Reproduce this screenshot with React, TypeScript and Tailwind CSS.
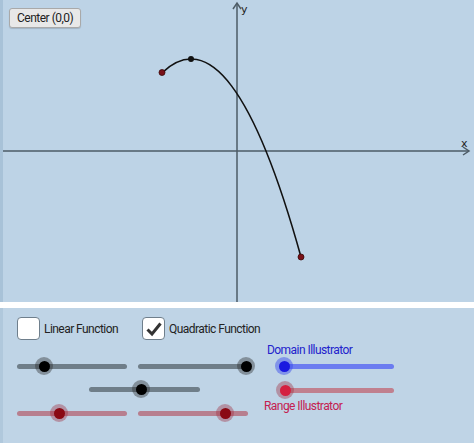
type SliderProps = {
  width: number;
  pos: number;
  track: string;
  thumb: string;
  halo: string;
};

function Slider({ width, pos, track, thumb, halo }: SliderProps) {
  return (
    <div className="relative h-[18px] shrink-0" style={{ width }}>
      <div className={`absolute left-0 right-0 top-[6.5px] h-[5px] rounded-full ${track}`} />
      <div
        className={`absolute top-0 h-[18px] w-[18px] -ml-[9px] rounded-full ${halo} flex items-center justify-center`}
        style={{ left: pos }}
      >
        <div className={`h-[11px] w-[11px] rounded-full ${thumb}`} />
      </div>
    </div>
  );
}

function Checkbox({ checked, label }: { checked: boolean; label: string }) {
  return (
    <div className="flex items-center gap-[4px]">
      <div className="h-[23px] w-[23px] rounded-[4px] border-[1.5px] border-[#6f7f8c] bg-white flex items-center justify-center">
        {checked && (
          <svg width="18" height="18" viewBox="0 0 18 18">
            <path d="M2.5 9.5 L7 14 L15.5 3.5" fill="none" stroke="#333" strokeWidth="3" strokeLinejoin="miter" />
          </svg>
        )}
      </div>
      <span className="text-[12px] tracking-[-0.55px] text-[#222]">{label}</span>
    </div>
  );
}

const gray = { track: "bg-[#6f7e89]", thumb: "bg-black", halo: "bg-[#2b2b2b]/40" };
const pink = { track: "bg-[#b77f8f]", thumb: "bg-[#8a0a14]", halo: "bg-[#a03040]/40" };

export default function App() {
  return (
    <div className="w-[474px] h-[448px] bg-white font-['Roboto',sans-serif] overflow-hidden">
      <div className="relative h-[302px] bg-[#bdd3e6] border-l-[3px] border-[#a8c2d8]">
        <svg className="absolute inset-0" width="471" height="302" viewBox="3 0 471 302">
          <line x1="3" y1="151" x2="468" y2="151" stroke="#4d5b66" strokeWidth="1.5" />
          <path d="M463 147 L469 151 L463 155" fill="none" stroke="#4d5b66" strokeWidth="1.5" />
          <line x1="237" y1="4" x2="237" y2="302" stroke="#4d5b66" strokeWidth="1.5" />
          <path d="M233 9 L237 3 L241 9" fill="none" stroke="#4d5b66" strokeWidth="1.5" />
          <text x="241" y="13" fontSize="11" fill="#222" fontFamily="DejaVu Sans, sans-serif">y</text>
          <text x="461" y="147" fontSize="11" fill="#222" fontFamily="DejaVu Sans, sans-serif">x</text>
          <path d="M162 72.8 Q231.5 6.85 301 257" fill="none" stroke="#111" strokeWidth="1.6" />
          <circle cx="162" cy="72.5" r="3" fill="#7a1018" stroke="#3a0a0a" strokeWidth="0.8" />
          <circle cx="191" cy="59" r="3" fill="#111" />
          <circle cx="301" cy="257" r="3" fill="#7a1018" stroke="#3a0a0a" strokeWidth="0.8" />
        </svg>
        <button className="absolute left-[6px] top-[8px] h-[20px] px-[7px] rounded-[3px] bg-[#e8e8e8] border border-[#a9a9a9] text-[12px] tracking-[-0.5px] text-[#222] leading-none shadow-[0_1px_1px_rgba(0,0,0,0.15)]">
          Center (0,0)
        </button>
      </div>
      <div className="h-[6px]" />
      <div className="h-[135px] bg-[#bfd4e6] border-l-[3px] border-[#b0c8dc] pl-[14px] pt-[9px]">
        <div className="flex gap-[24px]">
          <Checkbox checked={false} label="Linear Function" />
          <Checkbox checked={true} label="Quadratic Function" />
        </div>
        <div className="flex gap-[16px] mt-[3px]">
          <div className="flex flex-col pt-[14px] gap-[5px]">
            <div className="flex gap-[11px]">
              <Slider width={110} pos={27} {...gray} />
              <Slider width={110} pos={108} {...gray} />
            </div>
            <div className="pl-[72px]">
              <Slider width={111} pos={52} {...gray} />
            </div>
            <div className="flex gap-[11px] mt-[1px]">
              <Slider width={110} pos={42} {...pink} />
              <Slider width={110} pos={87} {...pink} />
            </div>
          </div>
          <div className="flex flex-col">
            <span className="text-[12px] tracking-[-0.55px] leading-[14px] text-[#2222cc] pl-[3px]">Domain Illustrator</span>
            <div className="pl-[16px] flex flex-col gap-[6px]">
              <Slider width={114} pos={4} track="bg-[#6b7cf0]" thumb="bg-[#1a1ae0]" halo="bg-[#3344ee]/45" />
              <Slider width={114} pos={5} track="bg-[#c0808f]" thumb="bg-[#d42040]" halo="bg-[#a03040]/40" />
            </div>
            <span className="text-[12px] tracking-[-0.55px] leading-[14px] text-[#c42050]">Range Illustrator</span>
          </div>
        </div>
      </div>
    </div>
  );
}
